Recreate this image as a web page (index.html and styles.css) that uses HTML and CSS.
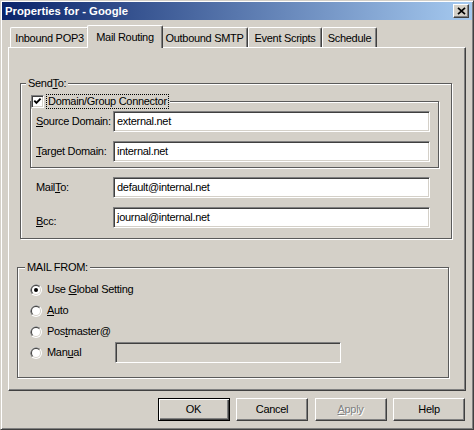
FILE: index.html
```html
<!DOCTYPE html>
<html>
<head>
<meta charset="utf-8">
<title>Properties for - Google</title>
<link rel="stylesheet" href="styles.css">
</head>
<body>
<div class="win">
  <div class="titlebar">
    <span class="title">Properties for - Google</span>
    <span class="close"><svg width="9" height="8" viewBox="0 0 9 8"><path d="M1 0.8 L8 7.2 M8 0.8 L1 7.2" stroke="#000" stroke-width="1.7" fill="none"/></svg></span>
  </div>
  <div class="body">
    <div class="tabs">
      <div class="tab t1">Inbound POP3</div>
      <div class="tab sel t2">Mail Routing</div>
      <div class="tab t3">Outbound SMTP</div>
      <div class="tab t4">Event Scripts</div>
      <div class="tab t5">Schedule</div>
    </div>
    <div class="panel">
      <fieldset class="group sendto">
        <legend class="glabel">Send<u>T</u>o:</legend>
        <fieldset class="group connector">
          <legend class="clabel"><span class="check"><svg width="11" height="11" viewBox="0 0 11 11"><path d="M2.3 4.6 L4.4 6.8 L8.6 2.6" stroke="#000" stroke-width="1.9" fill="none"/></svg></span><span class="focus">Domain/Group Connector</span></legend>
          <div class="form inner">
            <label><u>S</u>ource Domain:</label><div class="field">external.net</div>
            <label><u>T</u>arget Domain:</label><div class="field">internal.net</div>
          </div>
        </fieldset>
        <div class="form outer">
          <label>Mail<u>T</u>o:</label><div class="field">default@internal.net</div>
          <label class="low"><u>B</u>cc:</label><div class="field">journal@internal.net</div>
        </div>
      </fieldset>
      <fieldset class="group mailfrom">
        <legend class="glabel">MAIL FROM:</legend>
        <div class="radios">
          <div class="rrow">
            <span class="radio"><svg width="12" height="12" viewBox="0 0 12 12"><circle cx="6" cy="6" r="6" fill="#fff"/><path d="M10.24 1.76 A6 6 0 0 0 1.76 10.24 Z" fill="#808080"/><circle cx="6" cy="6" r="5" fill="#d4d0c8"/><path d="M9.54 2.46 A5 5 0 0 0 2.46 9.54 Z" fill="#404040"/><circle cx="6" cy="6" r="4" fill="#fff"/><circle cx="6" cy="6" r="2" fill="#000"/></svg></span>
            <span>Use <u>G</u>lobal Setting</span>
          </div>
          <div class="rrow">
            <span class="radio"><svg width="12" height="12" viewBox="0 0 12 12"><circle cx="6" cy="6" r="6" fill="#fff"/><path d="M10.24 1.76 A6 6 0 0 0 1.76 10.24 Z" fill="#808080"/><circle cx="6" cy="6" r="5" fill="#d4d0c8"/><path d="M9.54 2.46 A5 5 0 0 0 2.46 9.54 Z" fill="#404040"/><circle cx="6" cy="6" r="4" fill="#fff"/></svg></span>
            <span><u>A</u>uto</span>
          </div>
          <div class="rrow">
            <span class="radio"><svg width="12" height="12" viewBox="0 0 12 12"><circle cx="6" cy="6" r="6" fill="#fff"/><path d="M10.24 1.76 A6 6 0 0 0 1.76 10.24 Z" fill="#808080"/><circle cx="6" cy="6" r="5" fill="#d4d0c8"/><path d="M9.54 2.46 A5 5 0 0 0 2.46 9.54 Z" fill="#404040"/><circle cx="6" cy="6" r="4" fill="#fff"/></svg></span>
            <span>Pos<u>t</u>master@</span>
          </div>
          <div class="rrow">
            <span class="ropt">
              <span class="radio"><svg width="12" height="12" viewBox="0 0 12 12"><circle cx="6" cy="6" r="6" fill="#fff"/><path d="M10.24 1.76 A6 6 0 0 0 1.76 10.24 Z" fill="#808080"/><circle cx="6" cy="6" r="5" fill="#d4d0c8"/><path d="M9.54 2.46 A5 5 0 0 0 2.46 9.54 Z" fill="#404040"/><circle cx="6" cy="6" r="4" fill="#fff"/></svg></span>
              <span>Man<u>u</u>al</span>
            </span>
            <div class="field disabled manual"></div>
          </div>
        </div>
      </fieldset>
    </div>
    <div class="buttons">
      <div class="btn default">OK</div>
      <div class="btn">Cancel</div>
      <div class="btn disabled"><span><u>A</u>pply</span></div>
      <div class="btn">Help</div>
    </div>
  </div>
</div>
</body>
</html>
```

FILE: styles.css
```css
html, body {
  margin: 0;
  background: #d4d0c8;
}
body {
  font-family: "Liberation Sans", Arial, sans-serif;
  font-size: 11px;
  letter-spacing: -0.3px;
  color: #000;
}
.win {
  width: 474px;
  height: 430px;
  box-sizing: border-box;
  border: 1px solid;
  border-color: #d4d0c8 #404040 #404040 #d4d0c8;
  box-shadow: inset 1px 1px #fff, inset -1px -1px #808080;
  padding: 1px;
  background: #d4d0c8;
}
.titlebar {
  height: 18px;
  display: flex;
  align-items: center;
  justify-content: space-between;
  padding: 0 3px;
  background: linear-gradient(to right, #0a246a, #a6caf0);
}
.title {
  color: #fff;
  font-weight: bold;
  font-size: 11.3px;
  letter-spacing: 0;
  line-height: 14px;
}
.close {
  width: 16px;
  height: 14px;
  box-sizing: border-box;
  border: 1px solid;
  border-color: #fff #404040 #404040 #fff;
  box-shadow: inset -1px -1px #808080;
  background: #d4d0c8;
  display: flex;
  align-items: center;
  justify-content: center;
}
.close svg { display: block; }
.body {
  padding: 5px 6px 0 6px;
}
.tabs {
  display: flex;
  align-items: flex-end;
  height: 22px;
  padding-left: 2px;
}
.tab {
  box-sizing: border-box;
  height: 20px;
  padding-top: 4px;
  line-height: 13px;
  text-align: center;
  white-space: nowrap;
  border-top: 1px solid #fff;
  border-left: 1px solid #fff;
  border-right: 1px solid #404040;
  box-shadow: inset -1px 0 #808080;
  border-radius: 2px 2px 0 0;
  background: #d4d0c8;
}
.tab.sel {
  height: 23px;
  margin: 0 -2px -1px;
  padding-top: 5px;
  position: relative;
  z-index: 1;
}
.t1 { width: 79px; }
.t2 { width: 76px; }
.t3 { width: 87px; }
.t4 { width: 74px; }
.t5 { width: 55px; }
.panel {
  box-sizing: border-box;
  width: 458px;
  height: 344px;
  border: 1px solid;
  border-color: #fff #404040 #404040 #fff;
  box-shadow: inset -1px -1px #808080;
  overflow: hidden;
}
.group {
  margin: 0;
  padding: 0;
  min-width: 0;
  box-sizing: border-box;
  border: 1px solid #5a5a5a;
  box-shadow: inset 1px 1px #fff, 1px 1px #fff;
}
.group > legend {
  padding: 0 2px;
  line-height: 13px;
  background: #d4d0c8;
}
.sendto {
  width: 432px;
  margin: 29px 0 0 11px;
  padding-bottom: 10px;
}
.sendto > legend { margin-left: 5px; }
.connector {
  width: 409px;
  margin: 4px 0 0 9px;
}
.connector > legend.clabel {
  margin-left: 0;
  padding: 0 1px 0 0;
  height: 15px;
  line-height: 15px;
}
.check {
  display: inline-block;
  vertical-align: top;
  margin-top: 1px;
  width: 13px;
  height: 13px;
  box-sizing: border-box;
  border: 1px solid;
  border-color: #808080 #fff #fff #808080;
  box-shadow: inset 1px 1px #404040, inset -1px -1px #d4d0c8;
  background: #fff;
  margin-right: 2px;
}
.check svg { display: block; }
.focus {
  display: inline-block;
  vertical-align: top;
  border: 1px dotted #000;
  padding: 0 1px;
  line-height: 13px;
}
.form {
  display: grid;
  grid-template-columns: 77px 317px;
  grid-auto-rows: 21px;
  row-gap: 9px;
}
.form label {
  align-self: center;
  line-height: 13px;
}
.form label.low { align-self: end; }
.form.inner { padding: 2px 8px 5px 5px; }
.form.outer { margin: 9px 0 0 15px; }
.field {
  box-sizing: border-box;
  height: 21px;
  border: 1px solid;
  border-color: #808080 #fff #fff #808080;
  box-shadow: inset 1px 1px #404040, inset -1px -1px #d4d0c8;
  background: #fff;
  padding: 0 3px;
  line-height: 19px;
  white-space: nowrap;
}
.field.disabled { background: #d4d0c8; }
.field.manual { width: 226px; }
.mailfrom {
  width: 432px;
  margin: 22px 0 0 8px;
}
.mailfrom > legend { margin-left: 7px; }
.radios {
  padding: 5px 0 14px 12px;
}
.rrow {
  display: flex;
  align-items: center;
  height: 21px;
  line-height: 13px;
}
.ropt {
  display: flex;
  align-items: center;
  width: 85px;
}
.radio {
  width: 12px;
  height: 12px;
  margin-right: 5px;
  flex: none;
}
.radio svg { display: block; }
.buttons {
  display: flex;
  justify-content: flex-end;
  gap: 6.5px;
  margin-top: 7px;
  width: 458px;
  padding-right: 1px;
  box-sizing: border-box;
}
.btn {
  width: 72px;
  height: 23px;
  box-sizing: border-box;
  border: 1px solid;
  border-color: #fff #404040 #404040 #fff;
  box-shadow: inset -1px -1px #808080;
  display: flex;
  align-items: center;
  justify-content: center;
  line-height: 13px;
}
.btn.default {
  border-color: #000;
  box-shadow: inset 1px 1px #fff, inset -1px -1px #404040, inset -2px -2px #808080;
}
.btn.disabled {
  color: #808080;
  text-shadow: 1px 1px #fff;
}
```
